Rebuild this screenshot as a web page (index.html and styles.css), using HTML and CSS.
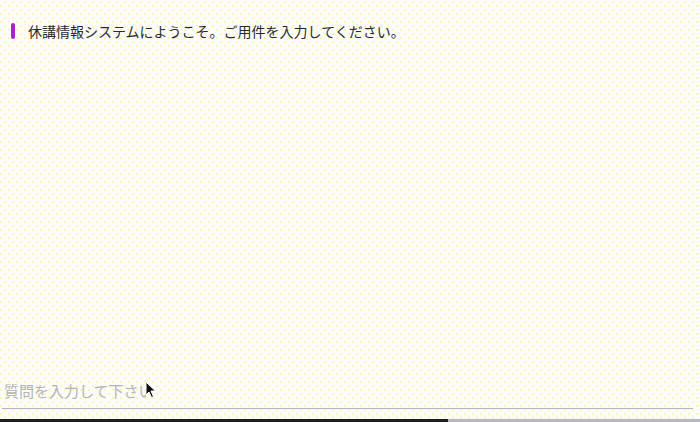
FILE: index.html
```html
<!DOCTYPE html>
<html lang="ja">
<head>
<meta charset="UTF-8">
<meta name="viewport" content="width=device-width, initial-scale=1.0">
<title>休講情報システム</title>
<link rel="stylesheet" href="styles.css">
</head>
<body>

<div class="chat">
    <div class="messages" id="messages">
        <div class="message">
            <span class="message-bar"></span>
            <p class="message-text">休講情報システムにようこそ。ご用件を入力してください。</p>
        </div>
    </div>

    <form class="input-area" id="chatForm">
        <input type="text" class="question" id="question" placeholder="質問を入力して下さい">
        <svg class="cursor" width="12" height="18" viewBox="0 0 12 18">
            <path d="M1 1 L1 14 L4 11 L6.5 16.5 L8.5 15.5 L6 10 L10.5 10 Z" fill="#111" stroke="#fff" stroke-width="1"/>
        </svg>
    </form>

    <div class="progress">
        <div class="progress-done" style="width: 64%;"></div>
    </div>
</div>

</body>
</html>
```

FILE: styles.css
```css
html, body {
    margin: 0;
    height: 100%;
}

body {
    font-family: "Noto Sans CJK JP", "Noto Sans", sans-serif;
    background-color: #fcfcff;
    background-image:
        radial-gradient(circle at 1px 1px, #f9f284 0.6px, transparent 0.9px),
        radial-gradient(circle at 1px 1px, #f9f284 0.6px, transparent 0.9px);
    background-size: 8px 8px;
    background-position: 4px 1px, 0 5px;
}

.chat {
    height: 100%;
    display: flex;
    flex-direction: column;
}

.messages {
    flex: 1;
    padding: 21px 0 0 11px;
}

.message {
    display: flex;
    align-items: center;
    gap: 13px;
}

.message-bar {
    width: 4px;
    height: 16px;
    border-radius: 2px;
    background-color: #a626c6;
}

.message-text {
    margin: 0;
    font-size: 14px;
    line-height: 20px;
    color: #2a2a2a;
}

.input-area {
    position: relative;
    margin: 0 7px 10px 2px;
    border-bottom: 1px solid #b2b2cc;
}

.question {
    width: 100%;
    box-sizing: border-box;
    padding: 5px 2px 7px 2px;
    border: none;
    outline: none;
    background: transparent;
    font-family: "Noto Sans CJK JP", "Noto Sans", sans-serif;
    font-size: 15px;
    line-height: 20px;
    color: #333;
}

.question::placeholder {
    color: #b4b4b4;
}

.cursor {
    position: absolute;
    left: 143px;
    top: 5px;
}

.progress {
    height: 3px;
    background-color: #b8b8c4;
}

.progress-done {
    height: 100%;
    background-color: #1e1e22;
}
```
